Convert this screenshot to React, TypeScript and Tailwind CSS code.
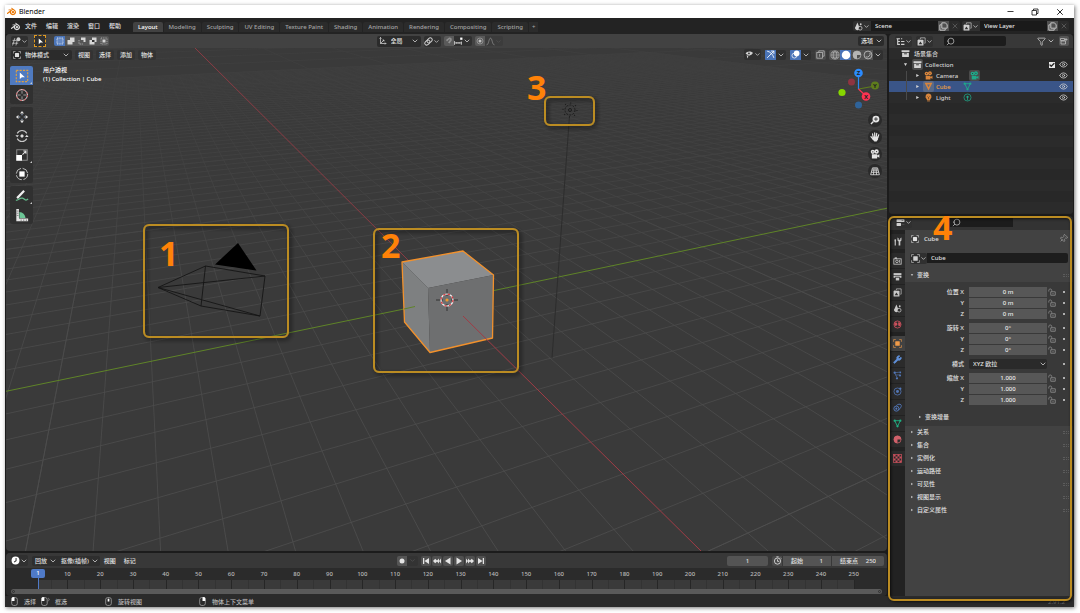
import React, { useState } from 'react';
import { Check, ChevronDown, Eye, Filter, Minus, Pin, Search, Wrench, X } from 'lucide-react';
import { SiBlender } from 'react-icons/si';

/* ---------- icons, all on a 16 unit box ---------- */

const icons: Record<string, React.ReactNode> = {
  editor3d: (
    <>
      <path d="M1 6h8M0 11h11M5 2 1 15M9 7 7 15" stroke="currentColor" strokeWidth="1.300" fill="none" />
      <circle cx="11.500" cy="4" r="3.500" fill="currentColor" />
    </>
  ),
  cursor: <path d="M4 1v13l4-4h6z" fill="currentColor" />,
  boxSelect: (
    <>
      <rect x="1.500" y="1.500" width="13" height="13" fill="none" stroke="#e0a040" strokeWidth="1.300" strokeDasharray="2.400 1.400" />
      <path d="M5.500 4v7.500l2.400-2.200h3.400z" fill="#fff" />
    </>
  ),
  selNew: <rect x="2" y="2" width="12" height="12" fill="currentColor" fillOpacity=".15" stroke="currentColor" strokeWidth="1.500" strokeDasharray="2 1.400" />,
  selAdd: <path d="M6 1h9v9h-4v5H1V6h5z" fill="currentColor" />,
  selSub: (
    <>
      <path d="M6 1h9v9h-4V6H6z" fill="currentColor" />
      <path d="M2 6v8h8" fill="none" stroke="currentColor" strokeWidth="1.300" strokeDasharray="2 1.400" />
    </>
  ),
  selInv: (
    <>
      <path d="M6 1h9v9h-4v5H1V6h5z" fill="currentColor" />
      <path d="M6 6h5v4H6z" fill="#333" />
    </>
  ),
  selAnd: (
    <>
      <rect x="2" y="2" width="12" height="12" fill="none" stroke="currentColor" strokeWidth="1.200" strokeDasharray="2 1.600" />
      <rect x="5" y="5" width="6" height="6" fill="currentColor" />
    </>
  ),
  axes: <path d="M3 1v12h11M3 13l7-7M1 3l2-2 2 2M12 11l2 2-2 2M7 6h3v3" fill="none" stroke="currentColor" strokeWidth="1.400" />,
  pivot: (
    <g fill="none" stroke="currentColor" strokeWidth="1.700">
      <ellipse cx="10" cy="6" rx="5" ry="3.600" transform="rotate(-40 10 6)" />
      <ellipse cx="6" cy="10" rx="5" ry="3.600" transform="rotate(-40 6 10)" />
    </g>
  ),
  magnet: <path d="M2 6 7 2c5-3 9 3 5 7l-3 4-3-2 3-4c2-2 0-3-1-2L4 9z" fill="currentColor" />,
  snapInc: (
    <>
      <path d="M1 7v7M1 10.500h13M5 9v3M9 9v3M13 8v6" stroke="currentColor" strokeWidth="1.400" fill="none" />
      <rect x="11" y="1" width="4" height="4" fill="#fff" />
    </>
  ),
  propEdit: (
    <>
      <circle cx="8" cy="8" r="6" fill="none" stroke="currentColor" strokeWidth="1" />
      <circle cx="8" cy="8" r="3" fill="currentColor" />
    </>
  ),
  falloff: <path d="M1 14c4 0 4-12 7-12s3 12 7 12" fill="none" stroke="currentColor" strokeWidth="1.500" />,
  objectMode: (
    <>
      <path d="M1 5V1h4M11 1h4v4M15 11v4h-4M5 15H1v-4" fill="none" stroke="currentColor" strokeWidth="1.100" />
      <rect x="4" y="4" width="8" height="8" rx="1" fill="currentColor" />
    </>
  ),
  crosshair: (
    <>
      <circle cx="8" cy="8" r="6.200" fill="none" stroke="#e6e6e6" strokeWidth="1.100" />
      <circle cx="8" cy="8" r="6.200" fill="none" stroke="#d2474c" strokeWidth="1.100" strokeDasharray="2.430 2.430" />
      <path d="M8 3v3.500M8 9.500V13M3 8h3.500M9.500 8H13" stroke="#a8a8a8" strokeWidth="1" />
    </>
  ),
  move: (
    <>
      <path d="M8 1l2.300 3H5.700zM8 15l2.300-3H5.700zM1 8l3-2.300v4.600zM15 8l-3-2.300v4.600z" fill="#e0e0e0" />
      <path d="M8 4.500v1.500M8 10v1.500M4.500 8H6M10 8h1.500" stroke="#8fa6c4" strokeWidth="1.200" />
    </>
  ),
  rotate: (
    <>
      <path d="M2.500 5a6.300 6.300 0 0 1 11 0M13.500 11a6.300 6.300 0 0 1-11 0" fill="none" stroke="#c8c8c8" strokeWidth="1.200" />
      <path d="M.500 7h4L2.500 9.500zM15.500 9h-4l2-2.500z" fill="#dcdcdc" />
      <path d="M8 5.800 10.200 8 8 10.200 5.800 8z" fill="#dcdcdc" />
    </>
  ),
  scale: (
    <>
      <rect x="2" y="2" width="12" height="12" fill="none" stroke="#8c8c8c" strokeWidth="1.100" />
      <rect x="1.500" y="8" width="6.500" height="6.500" fill="#fff" />
      <path d="M8.500 7.500 12.500 3.500M9.500 3.500h3v3" stroke="#e0e0e0" strokeWidth="1.200" fill="none" />
    </>
  ),
  transform: (
    <>
      <circle cx="8" cy="8" r="6.500" fill="none" stroke="#c0c0c0" strokeWidth="1.100" strokeDasharray="8.200 2" />
      <rect x="5" y="5" width="6" height="6" fill="#fff" />
    </>
  ),
  annotate: (
    <>
      <path d="M1.500 9.500 9.500 1l1.800 1.800-8 8.500z" fill="#f0f0f0" />
      <path d="M1 13c4 0 4-3.500 7.500-2.500s3 4 6.500 1" fill="none" stroke="#63b98a" strokeWidth="1.400" />
    </>
  ),
  measure: (
    <>
      <path d="M1.500 1h3v11H15v3H1.500z" fill="#e4e4e4" />
      <path d="M5 4.500a7.500 7.500 0 0 1 7 7H5z" fill="#6cc596" />
      <path d="M2 3.500h2M2 6h2M2 8.500h2M7 13v2M10 13v2M13 13v2" stroke="#555" strokeWidth=".7" />
    </>
  ),
  visible: (
    <>
      <path d="M1 6c2-4 9-5 13-1-1 3-4 5-7 5z" fill="currentColor" />
      <circle cx="7" cy="6" r="1.500" fill="#2b2b2b" />
      <path d="M3 8l1 7 2-3z" fill="currentColor" />
    </>
  ),
  gizmo: <path d="M2 14 14 2M9 2h5v5M2 2c5 1 10 5 12 12" fill="none" stroke="currentColor" strokeWidth="1.500" />,
  overlay: (
    <>
      <circle cx="10" cy="6" r="5" fill="currentColor" />
      <circle cx="6" cy="10" r="4.300" fill="none" stroke="currentColor" strokeWidth="1.300" />
    </>
  ),
  xray: (
    <g fill="none" stroke="currentColor" strokeWidth="1.300">
      <rect x="1.500" y="4.500" width="10" height="10" />
      <path d="M5 4V1.500h9.500V11H12M6.500 7v5" />
    </g>
  ),
  wire: (
    <g fill="none" stroke="currentColor" strokeWidth="1.100">
      <circle cx="8" cy="8" r="6.500" />
      <ellipse cx="8" cy="8" rx="3" ry="6.500" />
      <path d="M1.500 8h13M3 4.500h10M3 11.500h10" />
    </g>
  ),
  solid: <circle cx="8" cy="8" r="6.800" fill="currentColor" />,
  matPreview: (
    <>
      <circle cx="8" cy="8" r="6.300" fill="none" stroke="currentColor" strokeWidth="1.300" />
      <path d="M8 1.500a6.500 6.500 0 0 0 0 13V8h6.500A6.500 6.500 0 0 0 8 1.500z" fill="currentColor" />
    </>
  ),
  rendered: (
    <>
      <circle cx="8" cy="8" r="6.300" fill="none" stroke="currentColor" strokeWidth="1.500" />
      <path d="M11 4.500a5 5 0 0 1-6.500 6.500" fill="none" stroke="currentColor" strokeWidth="1.500" />
    </>
  ),
  zoomIn: (
    <>
      <circle cx="9.500" cy="6.500" r="5.500" fill="currentColor" />
      <path d="M5.500 10.500 1.500 14.500" stroke="currentColor" strokeWidth="2.400" />
      <path d="M9.500 3.500v6M6.500 6.500h6" stroke="#333" strokeWidth="1.400" />
    </>
  ),
  hand: (
    <>
      <path d="M5 8 4 3M7.500 7V1.500M10 7l.8-5M12.500 8.500l1.500-4M4.500 11 1.500 7.500" fill="none" stroke="currentColor" strokeWidth="1.900" strokeLinecap="round" />
      <path d="M4 7h9.500l-.8 5-2.200 3H7l-3.500-4z" fill="currentColor" />
    </>
  ),
  camera: (
    <>
      <circle cx="4.500" cy="4.500" r="3.300" fill="currentColor" />
      <circle cx="10.500" cy="4" r="3.500" fill="currentColor" />
      <circle cx="4.500" cy="4.500" r="1" fill="#333" />
      <circle cx="10.500" cy="4" r="1" fill="#333" />
      <path d="M3 8.500h8.500v2L15 8.500V14l-3.500-2v3H3z" fill="currentColor" />
    </>
  ),
  ortho: <path d="M4 3h8l3 11H1zM3 6.500h10M2 10h12M6.500 3 5.500 14M9.500 3l1 11" fill="none" stroke="currentColor" strokeWidth="1.300" />,
  scene: (
    <>
      <path d="M6 1 9 8a4 4 0 1 1-6 0z" fill="currentColor" />
      <circle cx="11" cy="11" r="3.300" fill="#2b2b2b" stroke="currentColor" strokeWidth="1.400" />
      <circle cx="12" cy="4" r="1.600" fill="currentColor" />
    </>
  ),
  layers: (
    <>
      <path d="M6 4V1.500h8.500V11H13M3.500 6.500V4" fill="none" stroke="currentColor" strokeWidth="1.200" />
      <rect x="1" y="5" width="10.500" height="10" rx="1" fill="currentColor" />
      <path d="M3 13l3-5 3.500 5z" fill="#333" />
    </>
  ),
  copy: (
    <>
      <path d="M5 1.500h6l3.500 3V11H5z" fill="none" stroke="currentColor" strokeWidth="1.500" />
      <path d="M4 5H1.500v9.500H11V12" fill="none" stroke="currentColor" strokeWidth="1.500" />
    </>
  ),
  restore: <path d="M2 5h9v9H2zM5 4.500V2h9v9h-2.500" fill="none" stroke="currentColor" strokeWidth="1.500" />,
  outliner: <path d="M1 3h6M3 3v10h4M3 8h4M9 3h2M9 8h6M9 13h6" fill="none" stroke="currentColor" strokeWidth="2" />,
  newColl: <path d="M1 3h8v4H1zM2 8h9v6H2zM12 2v6M9 5h6" fill="none" stroke="currentColor" strokeWidth="1.500" />,
  collection: (
    <>
      <path d="M1 2h14v3.500H1z" fill="currentColor" />
      <path d="M2 6.500h12V14H2z" fill="currentColor" />
      <path d="M5.500 8.500h5" stroke="#333" strokeWidth="1.600" />
    </>
  ),
  mesh: (
    <>
      <path d="M3 3h10L8 13z" fill="none" stroke="currentColor" strokeWidth="1.600" />
      <circle cx="3" cy="3" r="2" fill="currentColor" />
      <circle cx="13" cy="3" r="2" fill="currentColor" />
      <circle cx="8" cy="13" r="2" fill="currentColor" />
    </>
  ),
  meshFill: <path d="M1 1.500h14L8 15zM5.500 4.500 8 9.500l2.500-5z" fill="currentColor" fillRule="evenodd" />,
  bulb: (
    <>
      <path d="M8 1a5.500 5.500 0 0 0-3 10v1.500h6V11a5.500 5.500 0 0 0-3-10z" fill="currentColor" />
      <path d="M5.500 14h5" stroke="currentColor" strokeWidth="1.600" />
      <path d="M6 6l2 2 2-2M8 8v3" stroke="#4a3526" strokeWidth="1" fill="none" />
    </>
  ),
  lightData: (
    <>
      <circle cx="8" cy="8" r="6.300" fill="none" stroke="currentColor" strokeWidth="1.300" />
      <circle cx="8" cy="7" r="2" fill="currentColor" />
      <path d="M8 8v5" stroke="currentColor" strokeWidth="1.400" />
    </>
  ),
  propsEditor: (
    <>
      <rect x="1" y="2" width="14" height="5" rx="1" fill="currentColor" />
      <rect x="1" y="9" width="8" height="5" rx="1" fill="currentColor" />
      <path d="M10 4.500h3M10 11.500h5" stroke="#555" strokeWidth="1.200" />
    </>
  ),
  tool: (
    <>
      <path d="M3 4h2l.5 3-.5 1v7H3V8l-.5-1z" fill="currentColor" />
      <path d="M8 1v5l2 2v7h3V8l2-2V1l-2 1v3h-3V2z" fill="currentColor" />
    </>
  ),
  render: (
    <>
      <rect x="1.500" y="5" width="13" height="9.500" fill="none" stroke="currentColor" strokeWidth="1.500" />
      <path d="M3 2.500h4V5H3z" fill="currentColor" />
      <circle cx="7" cy="9.500" r="2.300" fill="none" stroke="currentColor" strokeWidth="1.500" />
      <path d="M11.500 7v5" stroke="currentColor" strokeWidth="1.400" />
    </>
  ),
  output: (
    <>
      <path d="M1 2h14v4H1z" fill="currentColor" />
      <path d="M1 7h14v3h-3V8.500H4V10H1z" fill="currentColor" />
      <path d="M5 10h6v5H5z" fill="currentColor" />
    </>
  ),
  world: (
    <>
      <circle cx="8" cy="8" r="6.300" fill="none" stroke="currentColor" strokeWidth="1.500" />
      <path d="M3 4l4 1 1 3-3 3-3-3zM10 3l4 3-1 4-3 1-1-4z" fill="currentColor" />
    </>
  ),
  particles: (
    <>
      <path d="M2 2l5 9M3 3l10-1M4 7h9" stroke="currentColor" strokeWidth="1.100" fill="none" />
      <circle cx="3" cy="3" r="2" fill="currentColor" />
      <circle cx="13" cy="2.500" r="1.500" fill="currentColor" />
      <circle cx="12.500" cy="8" r="1.800" fill="currentColor" />
      <circle cx="7" cy="13" r="2" fill="currentColor" />
    </>
  ),
  physics: (
    <>
      <circle cx="8" cy="8" r="6.300" fill="none" stroke="currentColor" strokeWidth="1.400" />
      <circle cx="8" cy="8" r="2.600" fill="currentColor" />
      <circle cx="13" cy="3" r="2" fill="currentColor" />
    </>
  ),
  constraint: (
    <>
      <circle cx="6" cy="10" r="4.500" fill="none" stroke="currentColor" strokeWidth="1.700" />
      <circle cx="6" cy="10" r="1.800" fill="currentColor" />
      <path d="M6 4.500c4-4 11-3 8 3l-4 5" fill="none" stroke="currentColor" strokeWidth="1.700" />
    </>
  ),
  checker: (
    <>
      <rect x="1" y="1" width="14" height="14" fill="none" stroke="currentColor" strokeWidth="1.300" />
      <path d="M1 1h3.500v3.500H1zM8 1h3.500v3.500H8zM4.500 4.500H8V8H4.500zM11.500 4.500H15V8h-3.500zM1 8h3.500v3.500H1zM8 8h3.500v3.500H8zM4.500 11.500H8V15H4.500zM11.500 11.500H15V15h-3.500z" fill="currentColor" />
    </>
  ),
  unlock: (
    <>
      <path d="M1.500 7V5c0-4 6-4 6 0v2" fill="none" stroke="currentColor" strokeWidth="1.400" />
      <path d="M5.500 7.500h9v7h-9zM10 10v2.500" fill="none" stroke="currentColor" strokeWidth="1.400" />
    </>
  ),
  clockFill: (
    <>
      <circle cx="8" cy="8" r="7" fill="currentColor" />
      <path d="M9 3.500v5L5.500 11" fill="none" stroke="#333" strokeWidth="1.800" />
    </>
  ),
  stopwatch: (
    <>
      <circle cx="8" cy="9" r="5.500" fill="none" stroke="currentColor" strokeWidth="1.500" />
      <path d="M8 6v3.500h3M6 1.500h4M13 3l1.500 1.500" fill="none" stroke="currentColor" strokeWidth="1.500" />
    </>
  ),
  record: <circle cx="8" cy="8" r="4" fill="currentColor" />,
  first: <path d="M2 2h2.500v12H2zM14 2v12L5 8z" fill="currentColor" />,
  prevKey: <path d="M0 8l4.500-4.500L8 7l4-4v10L8 9l-3.500 3.500zM16 3v10l-4-5z" fill="currentColor" />,
  back: <path d="M13 1v14L2 8z" fill="currentColor" />,
  play: <path d="M3 1v14l11-7z" fill="currentColor" />,
  nextKey: <path d="M16 8l-4.500-4.500L8 7 4 3v10l4-4 3.500 3.500zM0 3v10l4-5z" fill="currentColor" />,
  last: <path d="M14 2h-2.500v12H14zM2 2v12l9-6z" fill="currentColor" />,
  mouseL: (
    <>
      <rect x="3" y="1" width="10" height="14" rx="3.500" fill="none" stroke="currentColor" strokeWidth="1.200" />
      <path d="M3 7V4a3 3 0 0 1 5-3v6z" fill="#fff" />
    </>
  ),
  mouseDrag: (
    <>
      <rect x="1" y="1" width="10" height="14" rx="3.500" fill="none" stroke="currentColor" strokeWidth="1.200" />
      <path d="M1 7V4a3 3 0 0 1 5-3v6z" fill="#fff" />
      <path d="M13 2c2 1 2 4 0 5" fill="none" stroke="currentColor" strokeWidth="1.200" />
    </>
  ),
  mouseM: (
    <>
      <rect x="3" y="1" width="10" height="14" rx="3.500" fill="none" stroke="currentColor" strokeWidth="1.200" />
      <rect x="6.500" y="3" width="3" height="5" fill="#fff" />
    </>
  ),
  mouseR: (
    <>
      <rect x="3" y="1" width="10" height="14" rx="3.500" fill="none" stroke="currentColor" strokeWidth="1.200" />
      <path d="M13 7V4a3 3 0 0 0-5-3v6z" fill="#fff" />
    </>
  ),
  right: <path d="M4 3v10l9-5z" fill="currentColor" />,
  down: <path d="M3 4h10l-5 9z" fill="currentColor" />,
};

const Icon = ({ name, className = 'size-[10px]' }: { name: string; className?: string }) => (
  <svg viewBox="0 0 16 16" className={`${className} shrink-0`} aria-hidden="true">
    {icons[name]}
  </svg>
);

const Caret = () => <ChevronDown size={8} strokeWidth={2.5} className="shrink-0 text-[#c8c8c8]" />;

const IconMenu = ({ icon, label }: { icon: string; label: string }) => (
  <button aria-label={label} className="flex h-[11px] w-[17px] items-center justify-center rounded-xs bg-[#303030] text-[#d0d0d0]">
    <Icon name={icon} className="size-[9px]" />
    <ChevronDown size={7} strokeWidth={2.5} />
  </button>
);

/* ---------- scene ---------- */

// Perspective camera looking at the world origin
const CX = 446.5;
const CY = 299.5;
const FOCAL = 610;
const DIST = 18;
const SE = 0.453;
const CE = 0.892;
const SA = 0.909;
const CA = 0.416;

const depth = (x: number, y: number) => DIST + CE * (-SA * x + CA * y);

const project = (x: number, y: number) => {
  const d = depth(x, y);
  return [CX + (FOCAL * (CA * x + SA * y)) / d, CY - (FOCAL * SE * (-SA * x + CA * y)) / d];
};

// Cuts a ground segment where it passes behind the camera
const floorLine = (a: number[], b: number[]) => {
  const near = 2;
  const da = depth(a[0], a[1]);
  const db = depth(b[0], b[1]);
  if (da < near && db < near) return '';
  const cut = (p: number[], q: number[], dp: number, dq: number) => {
    const t = (near - dp) / (dq - dp);
    return [p[0] + (q[0] - p[0]) * t, p[1] + (q[1] - p[1]) * t];
  };
  const s = da < near ? cut(a, b, da, db) : a;
  const e = db < near ? cut(b, a, db, da) : b;
  const [x1, y1] = project(s[0], s[1]);
  const [x2, y2] = project(e[0], e[1]);
  return `M${x1.toFixed(1)} ${y1.toFixed(1)}L${x2.toFixed(1)} ${y2.toFixed(1)}`;
};

const gridPath = (step: number, count: number, reach: number) => {
  let path = '';
  for (let i = -count; i <= count; i++) {
    if (i === 0) continue;
    const k = i * step;
    path += floorLine([k, -reach], [k, reach]) + floorLine([-reach, k], [reach, k]);
  }
  return path;
};

const fineGrid = gridPath(1, 60, 60);
const coarseGrid = gridPath(10, 24, 240);

const Scene = () => (
  <svg viewBox="6 34 881 517" preserveAspectRatio="xMidYMid slice" className="absolute inset-0 size-full" aria-label="3D viewport">
    <defs>
      <linearGradient id="fade" x1="0" y1="34" x2="0" y2="551" gradientUnits="userSpaceOnUse">
        <stop offset="0" stopColor="#fff" stopOpacity=".2" />
        <stop offset=".25" stopColor="#fff" stopOpacity=".4" />
        <stop offset=".5" stopColor="#fff" stopOpacity=".8" />
        <stop offset="1" stopColor="#fff" />
      </linearGradient>
      <mask id="floor" maskUnits="userSpaceOnUse" x="6" y="34" width="881" height="517">
        <rect x="6" y="34" width="881" height="517" fill="url(#fade)" />
      </mask>
      <filter id="drop" x="-20%" y="-20%" width="150%" height="150%">
        <feDropShadow dx="2" dy="2" stdDeviation="2" floodColor="#000" floodOpacity=".7" />
      </filter>
    </defs>

    <g mask="url(#floor)" fill="none" stroke="#4f4f4f">
      <path d={fineGrid} strokeWidth=".8" />
      <path d={coarseGrid} strokeWidth=".8" />
    </g>

    <path d="M188 41 410 262" stroke="#8c3c44" />
    <path d="M5 391.500 404 309M494 290.500 888 208" stroke="#5f8428" />

    {/* camera */}
    <g fill="none" stroke="#151515" strokeWidth=".9">
      <path d="M158 287.500 205.500 266 265 276 260 316 201 306zM158 287.500 265 276M158 287.500 260 316M205.500 266 201 306" />
    </g>
    <path d="M238 243 256.500 270.500 215 264.500z" fill="#000" />

    {/* light */}
    <path d="M569.500 116 552 358" stroke="#2b2b2b" strokeWidth=".9" />
    <g fill="none" stroke="#1c1c1c">
      <circle cx="570" cy="110" r="5" strokeDasharray="2 1.200" />
      <circle cx="570" cy="110" r="1.500" />
      <circle cx="570" cy="110" r="7" strokeWidth="1.200" strokeDasharray="1 4.500" />
    </g>

    {/* cube */}
    <path d="M402 262 463 251 493.500 275 428 288z" fill="#8b8d8f" />
    <path d="M402 262 428 288 430 352.500 404.500 322z" fill="#7e8081" />
    <path d="M428 288 493.500 275 492.500 338 430 352.500z" fill="#6e6f70" />
    <path d="M402 262 463 251 493.500 275 492.500 338 430 352.500 404.500 322z" fill="none" stroke="#f2912c" strokeWidth="1.300" strokeLinejoin="round" />
    <path d="M404 309 415 306.500" stroke="#5f8428" />
    <path d="M463 316 702 552" stroke="#a03c46" />
    <g fill="none">
      <path d="M447 289v7M447 304v7M436 300h7M451 300h7" stroke="#2a2a2a" strokeWidth=".9" />
      <circle cx="447" cy="300" r="6" stroke="#f1f1f1" strokeWidth="1.200" />
      <circle cx="447" cy="300" r="6" stroke="#d8393f" strokeWidth="1.200" strokeDasharray="2.356 2.356" />
      <circle cx="447" cy="300" r="1.600" fill="#f29a2e" />
    </g>

    {/* callouts */}
    <g fill="none" stroke="#bb8c22" strokeWidth="2" filter="url(#drop)">
      <rect x="144" y="225" width="144" height="112" rx="5" />
      <rect x="374" y="229" width="144" height="143" rx="5" />
      <rect x="545" y="97" width="49" height="28" rx="5" />
    </g>
    <g fill="#ff8208" className="font-['Noto_Sans'] text-[34px] font-bold">
      <text x="159" y="266">1</text>
      <text x="381" y="258">2</text>
      <text x="527" y="100">3</text>
    </g>
  </svg>
);

const AxisGizmo = () => (
  <svg viewBox="0 0 44 44" className="size-[44px]" aria-label="View axes">
    <circle cx="13.500" cy="17" r="3.500" fill="#8f3440" />
    <circle cx="20.500" cy="40" r="3.500" fill="#2f6399" />
    <circle cx="4" cy="27.500" r="3.600" fill="#86d600" />
    <path d="M20.500 24 37 21" stroke="#5e7d1c" strokeWidth="1.200" />
    <circle cx="37" cy="20.500" r="4" fill="#5e7d1c" />
    <path d="M20.500 24V8" stroke="#2b87ef" strokeWidth="1.200" />
    <circle cx="20.500" cy="8" r="4.300" fill="#2b8cff" />
    <path d="M20.500 24 28 31" stroke="#ff3352" strokeWidth="1.200" />
    <circle cx="28" cy="31.500" r="4.300" fill="#ff3352" />
    <g className="font-['Noto_Sans'] text-[6px] font-bold" textAnchor="middle" fill="#222">
      <text x="20.500" y="10">Z</text>
      <text x="37" y="23">Y</text>
      <text x="28" y="34">X</text>
    </g>
  </svg>
);

/* ---------- top bar ---------- */

const menus = ['文件', '编辑', '渲染', '窗口', '帮助'];
const workspaces = ['Layout', 'Modeling', 'Sculpting', 'UV Editing', 'Texture Paint', 'Shading', 'Animation', 'Rendering', 'Compositing', 'Scripting'];

const DataBlock = ({ icon, label, value }: { icon: string; label: string; value: string }) => (
  <div className="flex h-[10px] items-center">
    <button aria-label={`Browse ${label}`} className="flex h-full w-[18px] items-center justify-center rounded-l-xs bg-[#303030] text-[#d0d0d0]">
      <Icon name={icon} className="size-[9px]" />
      <ChevronDown size={7} strokeWidth={2.5} />
    </button>
    <input aria-label={label} defaultValue={value} className="h-full w-[67px] bg-[#1a1a1a] px-1 text-[#e6e6e6] outline-none" />
    <button aria-label={`New ${label}`} className="flex h-full w-[11px] items-center justify-center bg-[#505050] text-[#d8d8d8]">
      <Icon name="copy" className="size-[9px]" />
    </button>
    <button aria-label={`Remove ${label}`} className="flex h-full w-[11px] items-center justify-center rounded-r-xs bg-[#2b2b2b] text-[#6a6a6a]">
      <X size={8} />
    </button>
  </div>
);

const TopBar = () => {
  const [active, setActive] = useState('Layout');
  return (
    <div className="flex h-4 shrink-0 items-center justify-between bg-[#232323] pr-[5px] pl-[6px]">
      <div className="flex h-full items-center">
        <SiBlender size={9} className="text-[#dcdcdc]" />
        <nav className="flex gap-[9px] pl-[5px]">
          {menus.map((m) => (
            <button key={m}>{m}</button>
          ))}
        </nav>
        <div className="flex gap-px self-end pb-[2px] pl-3">
          {workspaces.map((w) => (
            <button
              key={w}
              onClick={() => setActive(w)}
              className={`h-[10px] rounded-t-xs px-[5px] whitespace-nowrap ${
                w === active ? 'bg-[#424242] text-white' : 'bg-[#2b2b2b] text-[#a4a4a4]'
              }`}
            >
              {w}
            </button>
          ))}
          <button aria-label="Add workspace" className="h-[10px] bg-[#2b2b2b] px-[3px] text-[#a4a4a4]">+</button>
        </div>
      </div>
      <div className="flex gap-[2px]">
        <DataBlock icon="scene" label="Scene" value="Scene" />
        <DataBlock icon="layers" label="View Layer" value="View Layer" />
      </div>
    </div>
  );
};

/* ---------- viewport ---------- */

const selectModes = ['selNew', 'selAdd', 'selSub', 'selInv', 'selAnd'];
const shadings = ['wire', 'solid', 'matPreview', 'rendered'];
const navigation = ['zoomIn', 'hand', 'camera', 'ortho'];
const toolGroups = [
  ['boxSelect', 'crosshair'],
  ['move', 'rotate', 'scale', 'transform'],
  ['annotate', 'measure'],
];
const withSubmenu = ['boxSelect', 'scale', 'annotate'];

const Viewport = () => {
  const [tool, setTool] = useState('boxSelect');
  const [shading, setShading] = useState('solid');

  return (
    <section className="relative min-h-0 flex-1 overflow-hidden rounded-sm bg-[#3a3a3a]">
      <Scene />
      <div className="relative">
        <div className="flex h-[14px] items-center bg-[#424242] pr-[3px] pl-[5px]">
          <div className="flex flex-1 items-center">
            <IconMenu icon="editor3d" label="Editor type" />
            <button aria-label="Active tool" className="ml-[6px] flex size-[12px] items-center justify-center border border-dashed border-[#e09a22] bg-[#303030] text-white">
              <Icon name="cursor" className="size-[7px]" />
            </button>
            <div className="ml-2 flex overflow-hidden rounded-xs">
              {selectModes.map((m, i) => (
                <button
                  key={m}
                  aria-label={m}
                  className={`flex h-[10px] w-[11px] items-center justify-center ${i === 0 ? 'bg-[#4a74b8] text-white' : 'bg-[#555] text-[#d6d6d6]'}`}
                >
                  <Icon name={m} className="size-[8px]" />
                </button>
              ))}
            </div>
          </div>
          <div className="mr-4 flex items-center gap-[3px]">
            <div className="flex h-[11px] w-[44px] items-center rounded-xs bg-[#2b2b2b] px-[2px]">
              <Icon name="axes" className="size-[8px]" />
              <select aria-label="Transform orientation" className="min-w-0 flex-1 appearance-none bg-transparent pl-[4px] outline-none">
                <option>全局</option>
              </select>
              <Caret />
            </div>
            <IconMenu icon="pivot" label="Pivot point" />
            <div className="flex h-[10px] items-center">
              <button aria-label="Snap" className="flex h-full w-[10px] items-center justify-center rounded-l-xs bg-[#5a5a5a] text-[#8f8f8f]">
                <Icon name="magnet" className="size-[8px]" />
              </button>
              <button aria-label="Snap to" className="flex h-full w-[18px] items-center justify-center rounded-r-xs bg-[#303030]">
                <Icon name="snapInc" className="size-[9px]" />
                <Caret />
              </button>
            </div>
            <div className="flex h-[10px] items-center">
              <button aria-label="Proportional editing" className="flex h-full w-[10px] items-center justify-center rounded-l-xs bg-[#5a5a5a] text-[#c0c0c0]">
                <Icon name="propEdit" className="size-[8px]" />
              </button>
              <button aria-label="Falloff" className="flex h-full w-[18px] items-center justify-center rounded-r-xs bg-[#3c3c3c] text-[#8a8a8a]">
                <Icon name="falloff" className="size-[9px]" />
                <ChevronDown size={7} className="text-[#5a5a5a]" />
              </button>
            </div>
          </div>
          <div className="flex flex-1 justify-end">
            <button className="flex h-[10px] items-center gap-[2px] rounded-xs bg-[#2b2b2b] pr-px pl-[3px]">
              选项
              <Caret />
            </button>
          </div>
        </div>

        <div className="flex h-[13px] items-center justify-between pr-[4px] pl-[5px]">
          <div className="flex items-center gap-[3px]">
            <div className="flex h-[10px] w-[61px] items-center rounded-xs bg-[#2b2b2b] px-[2px]">
              <Icon name="objectMode" className="size-[8px]" />
              <select aria-label="Mode" className="min-w-0 flex-1 appearance-none bg-transparent pl-[4px] outline-none">
                <option>物体模式</option>
              </select>
              <Caret />
            </div>
            {['视图', '选择', '添加', '物体'].map((m) => (
              <button key={m} className="h-[10px] rounded-xs bg-[#333] px-[3px]">{m}</button>
            ))}
          </div>
          <div className="flex items-center gap-[3px]">
            <IconMenu icon="visible" label="Object types visibility" />
            {['gizmo', 'overlay'].map((n) => (
              <div key={n} className="flex h-[10px] overflow-hidden rounded-xs pl-px">
                <button aria-label={n} className="flex w-[11px] items-center justify-center bg-[#4a74b8] text-white">
                  <Icon name={n} className="size-[9px]" />
                </button>
                <button aria-label={`${n} options`} className="flex w-[10px] items-center justify-center bg-[#303030]">
                  <Caret />
                </button>
              </div>
            ))}
            <button aria-label="X-ray" className="ml-px flex h-[10px] w-[11px] items-center justify-center rounded-xs bg-[#4a4a4a] text-[#c0c0c0]">
              <Icon name="xray" className="size-[9px]" />
            </button>
            <div className="flex h-[10px] overflow-hidden rounded-xs">
              {shadings.map((s) => (
                <button
                  key={s}
                  aria-label={s}
                  onClick={() => setShading(s)}
                  className={`flex w-[11px] items-center justify-center ${s === shading ? 'bg-[#4a74b8] text-white' : 'bg-[#505050] text-[#b4b4b4]'}`}
                >
                  <Icon name={s} className="size-[10px]" />
                </button>
              ))}
              <button aria-label="Shading options" className="flex w-[10px] items-center justify-center bg-[#303030]">
                <Caret />
              </button>
            </div>
          </div>
        </div>

        <div className="flex items-start pt-[5px] pl-[4px]">
          <div className="flex w-[23px] flex-col gap-[3px]">
            {toolGroups.map((group) => (
              <div key={group[0]} className="flex flex-col overflow-hidden rounded-xs bg-[#303030]">
                {group.map((t) => (
                  <button
                    key={t}
                    aria-label={t}
                    onClick={() => setTool(t)}
                    className={`relative flex h-[19px] items-center justify-center ${t === tool ? 'bg-[#4f7ac0]' : ''}`}
                  >
                    <Icon name={t} className="size-[14px]" />
                    {withSubmenu.includes(t) && (
                      <svg viewBox="0 0 3 3" className="absolute right-px bottom-px size-[2px]">
                        <path d="M3 0v3H0z" fill="#ccc" />
                      </svg>
                    )}
                  </button>
                ))}
              </div>
            ))}
          </div>
          <div className="pl-[10px] leading-[9px] text-white">
            <p>用户透视</p>
            <p>(1) Collection | Cube</p>
          </div>
        </div>
      </div>

      <div className="absolute top-[31px] right-[5px] flex flex-col items-end gap-[4px]">
        <AxisGizmo />
        <div className="flex flex-col gap-[3px] text-[#e4e4e4]">
          {navigation.map((n) => (
            <button key={n} aria-label={n} className="flex size-[14px] items-center justify-center rounded-full bg-[#2a2a2a]">
              <Icon name={n} />
            </button>
          ))}
        </div>
      </div>
    </section>
  );
};

/* ---------- timeline ---------- */

const frames = Array.from({ length: 25 }, (_, i) => (i + 1) * 10);
const transport = ['first', 'prevKey', 'back', 'play', 'nextKey', 'last'];

const Timeline = () => (
  <section className="shrink-0 overflow-hidden rounded-sm bg-[#2b2b2b]">
    <div className="flex h-[15px] items-center bg-[#383838] pr-[3px] pl-[5px]">
      <div className="flex flex-1 items-center gap-[4px]">
        <button aria-label="Timeline editor" className="flex h-[11px] w-[17px] items-center rounded-xs bg-[#303030] text-white">
          <Icon name="clockFill" className="size-[9px]" />
          <Caret />
        </button>
        <div className="flex">
          <button className="flex h-[10px] items-center gap-[2px] rounded-l-xs bg-[#2e2e2e] pr-px pl-[3px]">
            回放
            <Caret />
          </button>
          <button className="flex h-[10px] items-center gap-[2px] rounded-r-xs bg-[#2e2e2e] pr-px pl-[3px] whitespace-nowrap">
            抠像(插帧)
            <Caret />
          </button>
        </div>
        <button>视图</button>
        <button className="pl-[4px]">标记</button>
      </div>
      <div className="mr-3 flex items-center text-[#e4e4e4]">
        <button aria-label="Auto keying" className="flex h-[10px] w-[10px] items-center justify-center rounded-l-xs bg-[#555]">
          <Icon name="record" />
        </button>
        <button aria-label="Keying options" className="flex h-[10px] w-[11px] items-center justify-center rounded-r-xs bg-[#333] text-[#5c5c5c]">
          <ChevronDown size={7} />
        </button>
        <div className="ml-[3px] flex gap-px">
          {transport.map((t) => (
            <button key={t} aria-label={t} className="flex h-[10px] w-[10px] items-center justify-center rounded-xs bg-[#505050]">
              <Icon name={t} className="size-[8px]" />
            </button>
          ))}
        </div>
      </div>
      <div className="flex flex-1 items-center justify-end">
        <input aria-label="Current frame" defaultValue="1" className="h-[10px] w-[41px] rounded-xs bg-[#545454] text-center outline-none" />
        <button aria-label="Use preview range" className="ml-[4px] flex h-[10px] w-[10px] items-center justify-center rounded-l-xs bg-[#4a4a4a]">
          <Icon name="stopwatch" className="size-[9px]" />
        </button>
        <label className="ml-px flex h-[10px] w-[48px] items-center justify-between bg-[#545454] px-2">
          起始
          <input defaultValue="1" className="w-3 bg-transparent text-right outline-none" />
        </label>
        <label className="ml-px flex h-[10px] w-[52px] items-center justify-between rounded-r-xs bg-[#545454] px-2">
          结束点
          <input defaultValue="250" className="w-3 bg-transparent text-right outline-none" />
        </label>
      </div>
    </div>
    <div className="relative">
      <div className="flex h-3 items-center pr-[17px] pl-[45px] text-center text-[#b8b8b8]">
        {frames.map((f) => (
          <span key={f} className="flex-1">{f}</span>
        ))}
      </div>
      <div className="flex h-[9px] bg-[#2b2b2b] pr-[17px] pl-[32px]">
        <div className="w-[13px] bg-[#3a3a3a]" />
        {frames.map((f) => (
          <div key={f} className="flex flex-1 border-l border-[#333]">
            <div className="flex-1 bg-[#3a3a3a]" />
            <div className={`flex-1 border-l border-[#262626] ${f === 250 ? 'bg-[#2b2b2b]' : 'bg-[#3a3a3a]'}`} />
          </div>
        ))}
      </div>
      <div className="absolute top-px left-[25px] flex h-5 w-[14px] flex-col items-center">
        <span className="h-[9px] w-full rounded-xs bg-[#4f7ac8] text-center leading-[9px] text-white">1</span>
        <span className="w-px flex-1 bg-[#4f7ac8]" />
      </div>
    </div>
    <div className="px-[5px] pb-[2px]">
      <div className="flex h-[5px] items-center justify-between rounded-full bg-[#5a5a5a] px-px">
        <span className="size-[3px] rounded-full border border-[#303030]" />
        <span className="size-[3px] rounded-full border border-[#303030]" />
      </div>
    </div>
  </section>
);

/* ---------- outliner ---------- */

const objects = [
  { name: 'Camera', icon: 'camera', data: 'camera' },
  { name: 'Cube', icon: 'meshFill', data: 'mesh' },
  { name: 'Light', icon: 'bulb', data: 'lightData' },
];

const Outliner = () => {
  const [selected, setSelected] = useState('Cube');
  return (
    <section className="flex h-[32%] shrink-0 flex-col overflow-hidden rounded-sm bg-[#2a2a2a]">
      <div className="flex h-[14px] shrink-0 items-center bg-[#383838] pr-[4px] pl-[6px]">
        <IconMenu icon="outliner" label="Editor type" />
        <div className="w-[4px]" />
        <IconMenu icon="layers" label="Display mode" />
        <div className="ml-[11px] flex h-[10px] w-[62px] items-center rounded-xs bg-[#1c1c1c] px-[2px]">
          <Search size={9} className="shrink-0 -scale-x-100 text-[#c0c0c0]" />
          <input aria-label="Filter outliner" className="w-full bg-transparent outline-none" />
        </div>
        <div className="flex-1" />
        <button aria-label="Filter" className="flex h-[10px] items-center gap-px text-[#c8c8c8]">
          <Filter size={9} />
          <Caret />
        </button>
        <button aria-label="New collection" className="ml-[4px] flex size-[10px] items-center justify-center rounded-xs bg-[#555] text-[#c0c0c0]">
          <Icon name="newColl" className="size-[8px]" />
        </button>
      </div>
      <div className="relative min-h-0 flex-1 bg-[repeating-linear-gradient(#2b2b2b_0px,#2b2b2b_11px,#282828_11px,#282828_22px)] text-[#d4d4d4]">
        <div className="flex h-[11px] items-center gap-[4px] pl-3">
          <Icon name="collection" className="size-[9px]" />
          场景集合
        </div>
        <div className="flex h-[11px] items-center pr-[5px] pl-[14px]">
          <span className="w-[9px]"><Icon name="down" className="size-[5px]" /></span>
          <span className="flex size-[11px] items-center justify-center rounded-xs bg-[#4b4b4b]">
            <Icon name="collection" className="size-[9px]" />
          </span>
          <span className="flex-1 pl-[2px]">Collection</span>
          <span className="relative flex">
            <input type="checkbox" defaultChecked aria-label="Enable Collection" className="peer size-[6px] appearance-none bg-[#e8e8e8]" />
            <Check size={6} strokeWidth={5} className="pointer-events-none absolute inset-0 hidden text-[#222] peer-checked:block" />
          </span>
          <Eye size={9} className="ml-[4px]" />
        </div>
        {objects.map((o) => (
          <div
            key={o.name}
            onClick={() => setSelected(o.name)}
            className={`flex h-[11px] items-center pr-[5px] pl-[26px] ${o.name === selected ? 'bg-[#3a5588] text-[#f0a040]' : ''}`}
          >
            <span className="w-[8px] text-[#d4d4d4]"><Icon name="right" className="size-[5px]" /></span>
            <span className={`flex size-[11px] items-center justify-center rounded-xs text-[#d8853c] ${o.name === selected ? 'bg-[#5a6a88]' : ''}`}>
              <Icon name={o.icon} className="size-[9px]" />
            </span>
            <span className="pl-[2px]">{o.name}</span>
            <span className={`ml-[11px] flex size-[11px] items-center justify-center rounded-xs text-[#1fa98a] ${o.name === 'Camera' ? 'bg-[#4b4b4b]' : ''}`}>
              <Icon name={o.data} className="size-[9px]" />
            </span>
            <span className="flex-1" />
            <Eye size={9} className="text-[#d4d4d4]" />
          </div>
        ))}
        <div className="absolute top-[23px] left-[17px] h-[29px] w-px bg-[#4a4a4a]" />
      </div>
    </section>
  );
};

/* ---------- properties ---------- */

const propTabs = [
  { icon: 'tool', color: 'text-[#c8c8c8]', gap: 'mb-[3px]' },
  { icon: 'render', color: 'text-[#c8c8c8]', gap: '' },
  { icon: 'output', color: 'text-[#c8c8c8]', gap: '' },
  { icon: 'layers', color: 'text-[#c8c8c8]', gap: '' },
  { icon: 'scene', color: 'text-[#c8c8c8]', gap: '' },
  { icon: 'world', color: 'text-[#c9505c]', gap: 'mb-[3px]' },
  { icon: 'objectMode', color: 'text-[#ef9a48]', gap: '' },
  { icon: 'wrench', color: 'text-[#5f8fd8]', gap: '' },
  { icon: 'particles', color: 'text-[#5277b8]', gap: '' },
  { icon: 'physics', color: 'text-[#5277b8]', gap: '' },
  { icon: 'constraint', color: 'text-[#5277b8]', gap: '' },
  { icon: 'mesh', color: 'text-[#1fb083]', gap: '' },
  { icon: 'matPreview', color: 'text-[#d0606a]', gap: 'mb-[3px]' },
  { icon: 'checker', color: 'text-[#c9505c]', gap: '' },
];

const vectors = [
  { label: '位置', values: ['0 m', '0 m', '0 m'] },
  { label: '旋转', values: ['0°', '0°', '0°'] },
  { label: '缩放', values: ['1.000', '1.000', '1.000'] },
];

const Vector = ({ label, values }: { label: string; values: string[] }) => (
  <div className="mb-[3px]">
    {values.map((v, i) => (
      <div key={i} className="flex h-[11px] items-center">
        <label htmlFor={`${label}-${i}`} className="w-16 pr-[5px] text-right">
          {i === 0 ? `${label} ` : ''}
          {'XYZ'[i]}
        </label>
        <input id={`${label}-${i}`} defaultValue={v} className="h-[10px] min-w-0 flex-1 bg-[#575757] text-center text-[#e8e8e8] outline-none" />
        <button aria-label={`Lock ${label} ${'XYZ'[i]}`} className="ml-px text-[#9c9c9c]">
          <Icon name="unlock" className="size-[8px]" />
        </button>
        <span className="mr-2 ml-[7px] size-[2px] rounded-full bg-[#d8d8d8]" />
      </div>
    ))}
  </div>
);

const panels = ['关系', '集合', '实例化', '运动路径', '可见性', '视图显示', '自定义属性'];

const Grip = () => <span className="h-[3px] w-[6px] border-y border-dotted border-[#5c5c5c]" />;

const Fold = ({ open = false }: { open?: boolean }) => (
  <span className="w-[7px] text-[#b4b4b4]">
    <Icon name={open ? 'down' : 'right'} className="size-[4px]" />
  </span>
);

const Properties = () => {
  const [tab, setTab] = useState('objectMode');
  return (
    <section className="relative flex min-h-0 flex-1 flex-col">
      <div className="flex h-[14px] shrink-0 items-center rounded-t-sm bg-[#333] pl-[6px]">
        <IconMenu icon="propsEditor" label="Editor type" />
        <div className="ml-[38px] flex h-[9px] w-[63px] items-center bg-[#1c1c1c] px-[2px]">
          <Search size={9} className="shrink-0 -scale-x-100 text-[#c0c0c0]" />
          <input aria-label="Search properties" className="w-full bg-transparent outline-none" />
        </div>
      </div>
      <div className="flex min-h-0 flex-1">
        <div className="flex w-4 shrink-0 flex-col bg-[#222] pt-[4px] pl-px">
          {propTabs.map((t) => (
            <button
              key={t.icon}
              aria-label={t.icon}
              onClick={() => setTab(t.icon)}
              className={`flex h-4 shrink-0 items-center justify-center rounded-l-xs border-b border-[#222] ${t.color} ${t.gap} ${
                t.icon === tab ? 'bg-[#424242]' : 'bg-[#2b2b2b]'
              }`}
            >
              {t.icon === 'wrench' ? <Wrench size={9} fill="currentColor" /> : <Icon name={t.icon} className="size-[9px]" />}
            </button>
          ))}
        </div>
        <div className="min-w-0 flex-1 bg-[#424242]">
          <div className="flex h-[18px] items-center pr-[5px] pl-[6px]">
            <Icon name="objectMode" className="size-[8px]" />
            <span className="flex-1 pl-[5px]">Cube</span>
            <Pin size={9} className="rotate-45 text-[#9a9a9a]" />
          </div>
          <div className="flex h-[21px] items-center pr-[5px] pl-[5px]">
            <IconMenu icon="objectMode" label="Browse object" />
            <input aria-label="Object name" defaultValue="Cube" className="h-[10px] min-w-0 flex-1 rounded-r-xs bg-[#1d1d1d] px-1 outline-none" />
          </div>
          <div className="flex h-[13px] items-center pr-[4px] pl-[5px]">
            <Fold open />
            <span className="flex-1">变换</span>
            <Grip />
          </div>
          <div className="bg-[#393939] pt-[5px]">
            <Vector {...vectors[0]} />
            <Vector {...vectors[1]} />
            <div className="mb-[3px] flex h-[11px] items-center">
              <label htmlFor="rot-mode" className="w-16 pr-[5px] text-right">模式</label>
              <div className="flex h-[10px] min-w-0 flex-1 items-center rounded-xs bg-[#2a2a2a]">
                <select id="rot-mode" className="min-w-0 flex-1 appearance-none bg-transparent pl-[4px] outline-none">
                  <option>XYZ 欧拉</option>
                </select>
                <Caret />
              </div>
              <span className="mr-2 ml-4 size-[2px] rounded-full bg-[#d8d8d8]" />
            </div>
            <Vector {...vectors[2]} />
            <button className="mt-[2px] flex h-[17px] w-full items-center pl-[13px]">
              <Fold />
              变换增量
            </button>
          </div>
          {panels.map((p) => (
            <button key={p} className="flex h-[13px] w-full items-center pr-[4px] pl-[5px] text-left">
              <Fold />
              <span className="flex-1">{p}</span>
              <Grip />
            </button>
          ))}
        </div>
      </div>
      {/* callout 4 sits over the whole editor */}
      <div className="pointer-events-none absolute -inset-x-px top-0 -bottom-[5px] mr-[2px] rounded-md border-2 border-[#bb8c22] shadow-[1px_1px_3px_#000a,inset_1px_1px_3px_#000a]" />
      <span className="pointer-events-none absolute -top-px left-11 text-[34px] leading-[24px] font-bold text-[#ff8208]">4</span>
    </section>
  );
};

/* ---------- window ---------- */

const hints = [
  { icon: 'mouseL', text: '选择', width: 'w-[31px]' },
  { icon: 'mouseDrag', text: '框选', width: 'w-[63px]' },
  { icon: 'mouseM', text: '旋转视图', width: 'w-[94px]' },
  { icon: 'mouseR', text: '物体上下文菜单', width: 'w-[80px]' },
];

const App = () => (
  <div className="h-screen bg-white p-[5px] pr-[6px] pb-[6px] font-['Noto_Sans','Noto_Sans_CJK_SC',sans-serif] text-[6px] leading-[8px] font-medium text-[#e0e0e0]">
    <div className="flex h-full flex-col bg-[#1c1c1c] shadow-[1px_1px_4px_#0008]">
      <header className="flex h-[13px] shrink-0 items-center bg-white pr-[9px] pl-[2px] text-[7px] font-normal text-black">
        <SiBlender size={9} className="text-[#ea7600]" />
        <span className="flex-1 pl-[3px]">Blender</span>
        <div className="flex items-center gap-[16px]">
          <button aria-label="Minimize"><Minus size={9} strokeWidth={2} /></button>
          <button aria-label="Restore"><Icon name="restore" className="size-[8px]" /></button>
          <button aria-label="Close"><X size={10} strokeWidth={2} /></button>
        </div>
      </header>
      <TopBar />
      <main className="flex min-h-0 flex-1 gap-[2px] px-px">
        <div className="flex min-w-0 flex-1 flex-col gap-[2px]">
          <Viewport />
          <Timeline />
        </div>
        <aside className="flex w-[184px] shrink-0 flex-col gap-[2px]">
          <Outliner />
          <Properties />
        </aside>
      </main>
      <footer className="flex h-[11px] shrink-0 items-center justify-between bg-[#2b2b2b] pr-[9px] pl-[5px] text-[#b8b8b8]">
        <div className="flex">
          {hints.map((h) => (
            <span key={h.text} className={`flex items-center gap-[5px] whitespace-nowrap ${h.width}`}>
              <Icon name={h.icon} className="size-[9px]" />
              {h.text}
            </span>
          ))}
        </div>
        <span className="text-[#6a6a6a]">2.91.2</span>
      </footer>
    </div>
  </div>
);

export default App;
